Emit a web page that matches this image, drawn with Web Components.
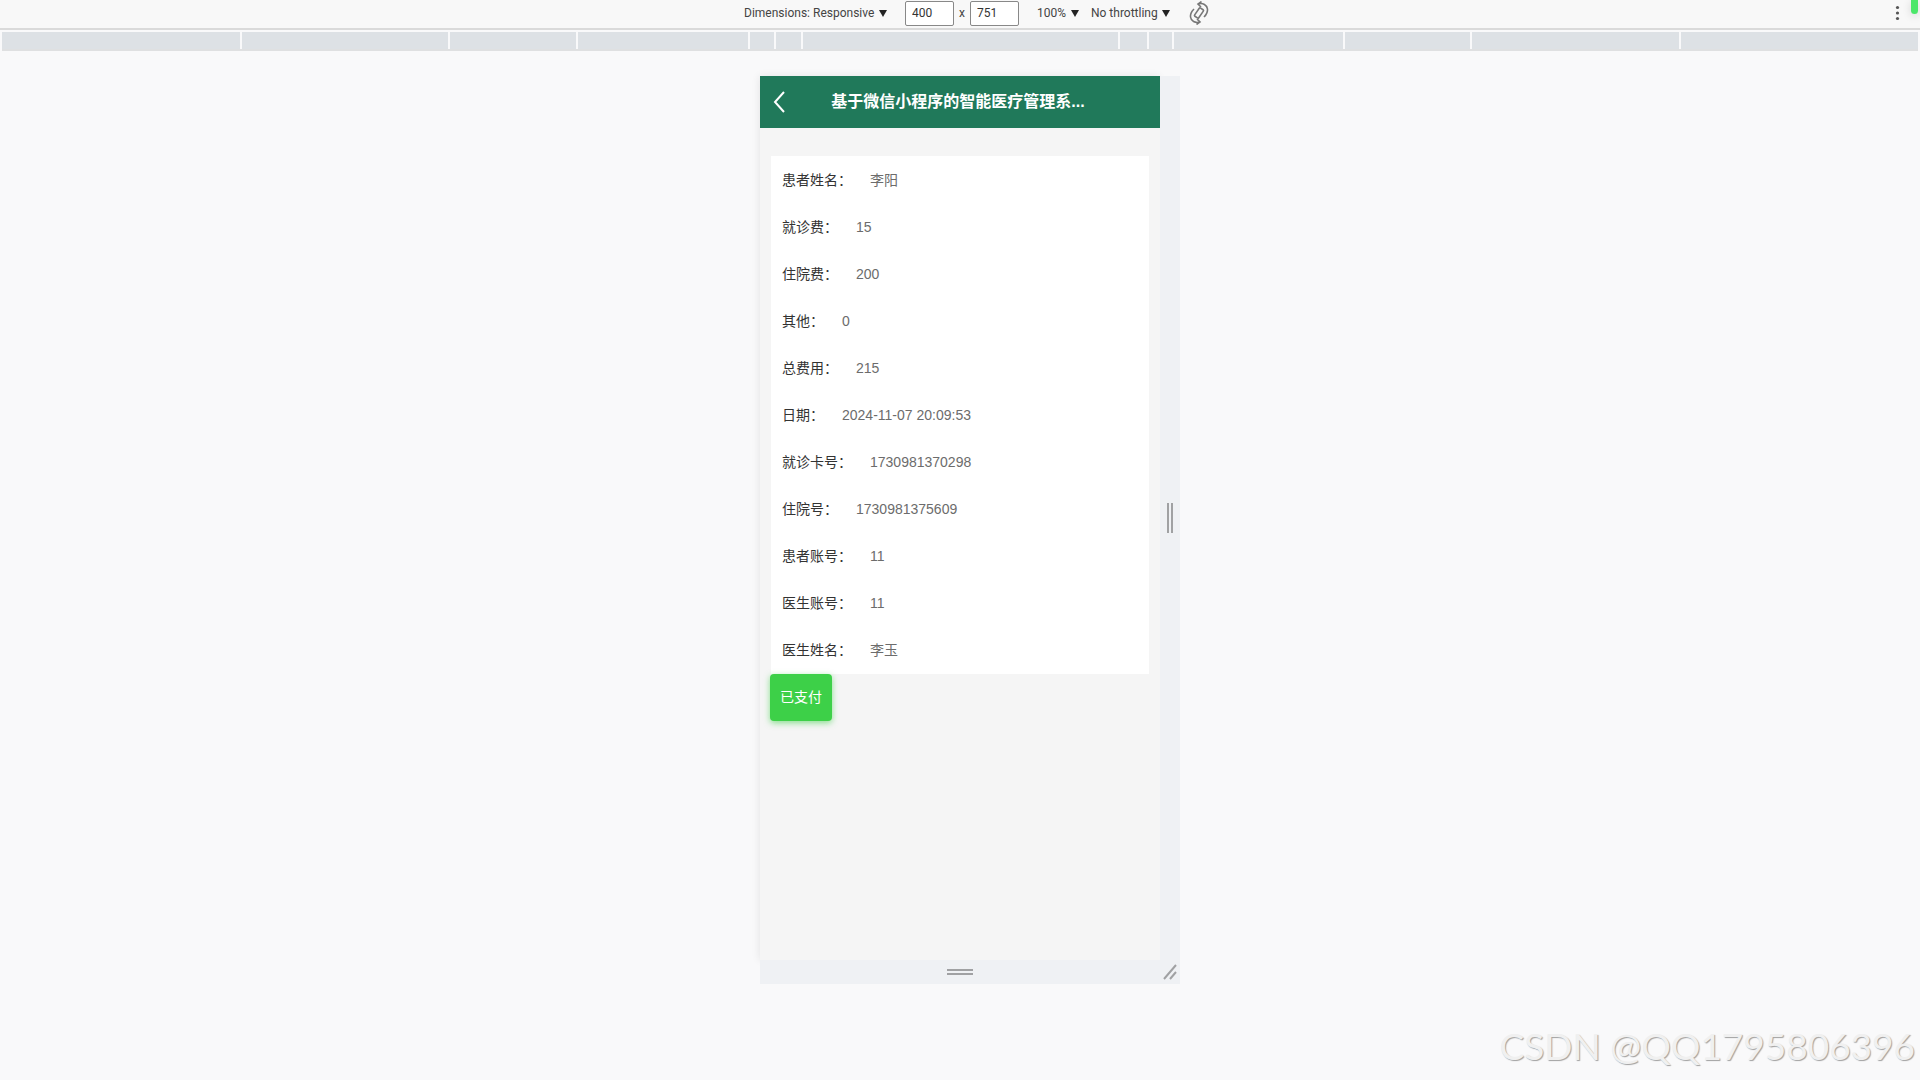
<!DOCTYPE html>
<html lang="zh-CN">
<head>
<meta charset="utf-8">
<title>缴费详情</title>
<style>
  html, body {
    height: 100%;
  }

  body {
    margin: 0;
    background: #f9f9fa;
    font-family: "Liberation Sans", "Noto Sans CJK SC", sans-serif;
    overflow: hidden;
  }
</style>
</head>
<body>
<device-app></device-app>

<script>
  class ToolSelect extends HTMLElement {
    constructor() {
      super();
      this.attachShadow({ mode: 'open' });
      this.shadowRoot.innerHTML = `
        <style>
          :host {
            display: flex;
            align-items: center;
            gap: 4px;
          }

          select {
            appearance: none;
            margin: 0;
            padding: 0;
            border: 0;
            background: none;
            color: #444;
            font: inherit;
          }

          svg {
            display: block;
            pointer-events: none;
          }
        </style>
        <select aria-label="${this.getAttribute('label')}">
          <option>${this.getAttribute('value')}</option>
        </select>
        <svg width="8" height="7" viewBox="0 0 8 7"><path d="M0 0h8L4 7z" fill="#222"/></svg>
      `;
    }
  }

  class DeviceToolbar extends HTMLElement {
    constructor() {
      super();
      this.attachShadow({ mode: 'open' });
      this.shadowRoot.innerHTML = `
        <style>
          :host {
            display: grid;
            grid-template-columns: 1fr auto 1fr;
            box-sizing: border-box;
            height: 30px;
            padding-bottom: 2px;
            border-bottom: 2px solid #dadada;
            background: #f8f8f8;
            color: #444;
            font: 12px/16px Roboto, "Open Sans", sans-serif;
          }

          #tools {
            display: flex;
            align-items: center;
            gap: 18px;
            margin-left: 34px;
          }

          #size {
            display: flex;
            align-items: center;
            gap: 5px;
          }

          input {
            box-sizing: border-box;
            width: 49px;
            height: 25px;
            margin: 0;
            padding: 0 6px;
            border: 1px solid #888;
            border-radius: 2px;
            background: #fff;
            color: #333;
            font: inherit;
          }

          #zoom {
            display: flex;
            gap: 12px;
          }

          button {
            display: block;
            padding: 0;
            border: 0;
            background: none;
          }

          svg {
            display: block;
          }

          #more {
            justify-self: end;
            align-self: center;
            margin-right: 20px;
          }
        </style>
        <span></span>
        <div id="tools">
          <tool-select label="Device" value="Dimensions: Responsive"></tool-select>
          <div id="size">
            <input aria-label="Width" value="400">
            <span>x</span>
            <input aria-label="Height" value="751">
          </div>
          <div id="zoom">
            <tool-select label="Zoom" value="100%"></tool-select>
            <tool-select label="Throttling" value="No throttling"></tool-select>
          </div>
          <button aria-label="Rotate">
            <svg width="22" height="24" viewBox="0 0 22 24" fill="none" stroke="#777" stroke-width="1.600">
              <rect x="8.500" y="7" width="5" height="10" rx="1" transform="rotate(35 11 12)"/>
              <path d="M10 3c5-1.500 9 1 9.500 5 .3 3-1 5.500-3.500 8"/>
              <path d="M12 21c-5 1.500-9-1-9.500-5-.3-3 1-5.500 3.500-8"/>
              <path d="M13.500 .5 10 3l3 3M8.500 23.500 12 21l-3-3"/>
            </svg>
          </button>
        </div>
        <button id="more" aria-label="More options">
          <svg width="5" height="16" viewBox="0 0 5 16" fill="#555">
            <circle cx="2.500" cy="2.500" r="1.600"/>
            <circle cx="2.500" cy="8" r="1.600"/>
            <circle cx="2.500" cy="13.500" r="1.600"/>
          </svg>
        </button>
      `;
    }
  }

  // media query bar, the breakpoints mirror around the middle
  class BreakpointRuler extends HTMLElement {
    constructor() {
      super();
      this.attachShadow({ mode: 'open' });
      this.shadowRoot.innerHTML = `
        <style>
          :host {
            display: grid;
            grid-template-columns: 238fr 206fr 126fr 170fr 24fr 25fr 315fr 27fr 23fr 169fr 125fr 207fr 237fr;
            gap: 2px;
            margin: 2px;
            border-bottom: 2px solid #dfe0e1;
            background: #f9f9fa;
          }

          i {
            height: 17px;
            background: #dde1e5;
          }
        </style>
        ${'<i></i>'.repeat(13)}
      `;
    }
  }

  class DeviceFrame extends HTMLElement {
    constructor() {
      super();
      this.attachShadow({ mode: 'open' });
      this.shadowRoot.innerHTML = `
        <style>
          :host {
            display: grid;
            grid-template-columns: 19fr 10fr 19fr;
            grid-template-rows: 1fr 24px;
            flex: 1;
            padding: 23px 0 96px;
          }

          #screen {
            grid-column: 2;
            background: #f5f5f5;
            box-shadow: -1px 0 8px rgba(0, 0, 0, 0.08);
          }

          .handle {
            display: flex;
            align-items: center;
            justify-content: center;
            background: #eff1f4;
          }

          #right,
          #corner {
            grid-column: 3;
            width: 20px;
          }

          #bottom {
            grid-column: 2;
          }
        </style>
        <div id="screen"><slot></slot></div>
        <div id="right" class="handle">
          <svg width="8" height="32" viewBox="0 0 8 32" stroke="#a0a1a3" stroke-width="2"><path d="M2 1v30M6 1v30"/></svg>
        </div>
        <div id="bottom" class="handle">
          <svg width="28" height="8" viewBox="0 0 28 8" stroke="#a0a1a3" stroke-width="2"><path d="M1 2h26M1 6h26"/></svg>
        </div>
        <div id="corner" class="handle">
          <svg width="14" height="16" viewBox="0 0 14 16" stroke="#a0a1a3" stroke-width="2"><path d="M1 15 13 1M7 15l6-7"/></svg>
        </div>
      `;
    }
  }

  class NavBar extends HTMLElement {
    constructor() {
      super();
      this.attachShadow({ mode: 'open' });
      this.shadowRoot.innerHTML = `
        <style>
          :host {
            display: grid;
            grid-template-columns: 40px 1fr 44px;
            align-items: center;
            height: 52px;
            background: #20795a;
            color: #fff;
          }

          button {
            display: block;
            padding: 0 0 0 12px;
            border: 0;
            background: none;
          }

          svg {
            display: block;
          }

          h1 {
            margin: 0;
            font-size: 16px;
            line-height: 24px;
            text-align: center;
            white-space: nowrap;
          }
        </style>
        <button aria-label="返回">
          <svg width="14" height="22" viewBox="0 0 14 22" fill="none" stroke="#fff" stroke-width="2"><path d="M12 1 3 11l9 10"/></svg>
        </button>
        <h1><slot></slot></h1>
      `;
    }
  }

  class DetailRow extends HTMLElement {
    constructor() {
      super();
      this.attachShadow({ mode: 'open' });
      this.shadowRoot.innerHTML = `
        <style>
          :host {
            display: flex;
            gap: 18px;
            padding: 0 11px;
            font-size: 14px;
            line-height: 47px;
          }

          #label {
            color: #333;
          }

          #value {
            color: #6c6c6c;
          }
        </style>
        <span id="label">${this.getAttribute('label')}：</span>
        <span id="value"><slot></slot></span>
      `;
    }
  }

  class DetailCard extends HTMLElement {
    constructor() {
      super();
      this.attachShadow({ mode: 'open' });
      this.shadowRoot.innerHTML = `
        <style>
          :host {
            display: block;
            margin: 0 1px;
            padding-top: 1px;
            background: #fff;
          }
        </style>
        <slot></slot>
      `;
    }
  }

  class PayButton extends HTMLElement {
    constructor() {
      super();
      this.attachShadow({ mode: 'open' });
      this.shadowRoot.innerHTML = `
        <style>
          :host {
            display: block;
          }

          button {
            display: block;
            padding: 0 10px;
            border: 0;
            border-radius: 4px;
            background: #3dd048;
            box-shadow: 0 2px 6px rgba(61, 208, 72, 0.6);
            color: #fff;
            font-family: inherit;
            font-size: 14px;
            line-height: 47px;
          }
        </style>
        <button><slot></slot></button>
      `;
    }
  }

  class DeviceApp extends HTMLElement {
    constructor() {
      super();
      this.attachShadow({ mode: 'open' });
      this.shadowRoot.innerHTML = `
        <style>
          :host {
            display: flex;
            flex-direction: column;
            position: relative;
            height: 100%;
          }

          main {
            padding: 28px 10px;
          }

          #status {
            position: absolute;
            top: 0;
            right: 2px;
            width: 7px;
            height: 14px;
            border-radius: 0 0 4px 4px;
            background: #4be76a;
            box-shadow: 0 2px 8px rgba(0, 0, 0, 0.15);
          }

          #watermark {
            position: absolute;
            right: 5px;
            bottom: 10px;
            color: #f0f0f0;
            font: 37px/48px Lato, sans-serif;
            text-shadow: 1px 1px 1px #a0a0a0;
          }
        </style>
        <device-toolbar></device-toolbar>
        <breakpoint-ruler></breakpoint-ruler>
        <device-frame>
          <nav-bar>基于微信小程序的智能医疗管理系...</nav-bar>
          <main>
            <detail-card>
              <detail-row label="患者姓名">李阳</detail-row>
              <detail-row label="就诊费">15</detail-row>
              <detail-row label="住院费">200</detail-row>
              <detail-row label="其他">0</detail-row>
              <detail-row label="总费用">215</detail-row>
              <detail-row label="日期">2024-11-07 20:09:53</detail-row>
              <detail-row label="就诊卡号">1730981370298</detail-row>
              <detail-row label="住院号">1730981375609</detail-row>
              <detail-row label="患者账号">11</detail-row>
              <detail-row label="医生账号">11</detail-row>
              <detail-row label="医生姓名">李玉</detail-row>
            </detail-card>
            <pay-button>已支付</pay-button>
          </main>
        </device-frame>
        <div id="status"></div>
        <div id="watermark">CSDN @QQ1795806396</div>
      `;
    }
  }

  customElements.define('tool-select', ToolSelect);
  customElements.define('device-toolbar', DeviceToolbar);
  customElements.define('breakpoint-ruler', BreakpointRuler);
  customElements.define('device-frame', DeviceFrame);
  customElements.define('nav-bar', NavBar);
  customElements.define('detail-row', DetailRow);
  customElements.define('detail-card', DetailCard);
  customElements.define('pay-button', PayButton);
  customElements.define('device-app', DeviceApp);
</script>
</body>
</html>
